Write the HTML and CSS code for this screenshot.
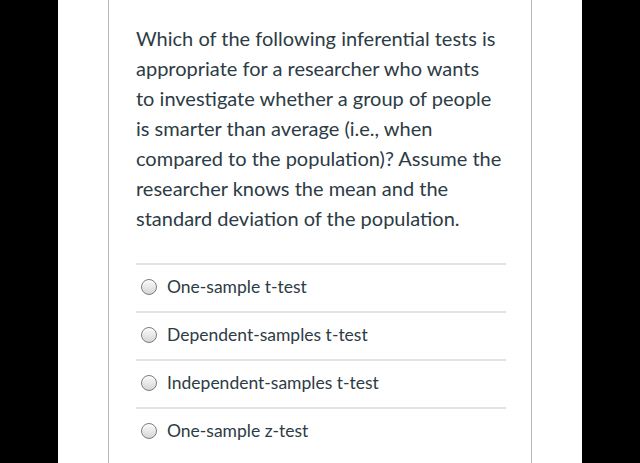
FILE: index.html
```html
<!DOCTYPE html>
<html>
<head>
<meta charset="utf-8">
<link rel="stylesheet" href="styles.css">
</head>
<body>
<div class="stage">
  <div class="sheet">
    <div class="panel">
      <p class="question">Which of the following inferential tests is appropriate for a researcher who wants<br>to investigate whether a group of people is smarter than average (i.e., when compared to the population)? Assume the researcher knows the mean and the standard deviation of the population.</p>
      <ul class="answers">
        <li class="answer"><span class="radio"></span><span class="label">One-sample t-test</span></li>
        <li class="answer"><span class="radio"></span><span class="label">Dependent-samples t-test</span></li>
        <li class="answer"><span class="radio"></span><span class="label">Independent-samples t-test</span></li>
        <li class="answer"><span class="radio"></span><span class="label">One-sample z-test</span></li>
      </ul>
    </div>
  </div>
</div>
</body>
</html>
```
FILE: styles.css
```css
html, body {
  margin: 0;
  padding: 0;
  background: #000;
  height: 100%;
  overflow: hidden;
}
.stage {
  display: flex;
  padding-left: 58px;
  height: 463px;
}
.sheet {
  width: 524px;
  background: #fff;
  padding-left: 50px;
  box-sizing: border-box;
  height: 100%;
}
.panel {
  width: 424px;
  box-sizing: border-box;
  border-left: 1px solid #b9b9b9;
  border-right: 1px solid #b9b9b9;
  height: 100%;
  padding: 23px 25px 0 27px;
  font-family: Lato, "Noto Sans", sans-serif;
  color: #2d3b45;
}
.question {
  margin: 0;
  width: 368px;
  font-size: 20px;
  line-height: 30px;
}
.answers {
  list-style: none;
  margin: 30px 0 0 0;
  padding: 0;
}
.answer {
  display: flex;
  align-items: center;
  height: 48px;
  border-top: 2px solid #e3e3e3;
  box-sizing: border-box;
  padding-left: 5px;
  gap: 10px;
  font-size: 17.5px;
  line-height: 22px;
  padding-bottom: 2px;
}
.radio {
  width: 16px;
  height: 16px;
  border-radius: 50%;
  box-sizing: border-box;
  border: 1px solid #7d7d7d;
  background: linear-gradient(#fafafa, #d6d6d6);
  box-shadow: inset 0 1px 1px rgba(255,255,255,0.8);
  flex: none;
}
```
